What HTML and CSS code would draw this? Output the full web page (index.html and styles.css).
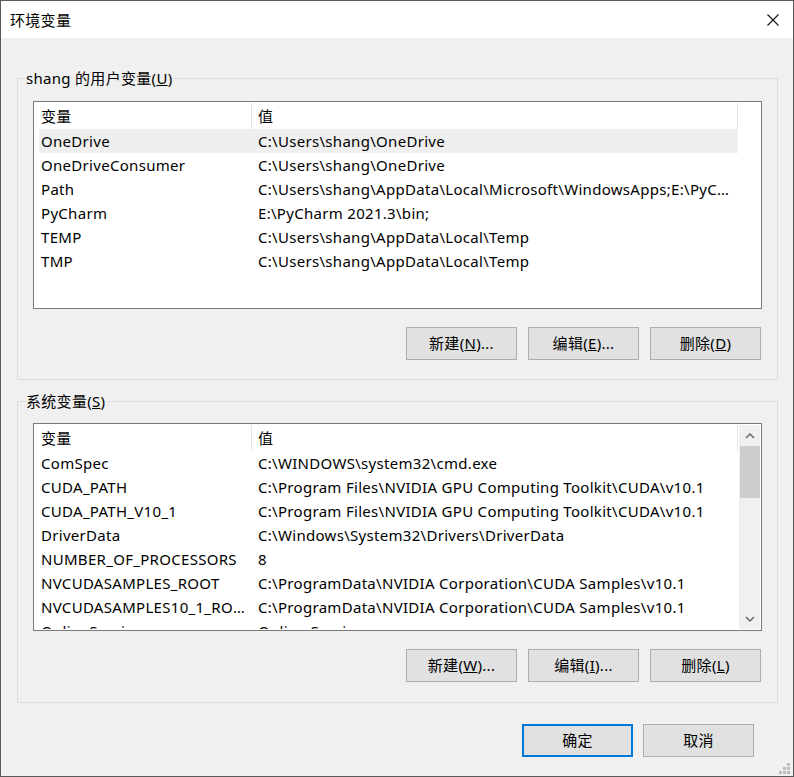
FILE: index.html
```html
<!DOCTYPE html>
<html lang="zh-CN">
<head>
  <meta charset="UTF-8">
  <title>环境变量</title>
  <link rel="stylesheet" href="styles.css">
</head>
<body>
  <div class="window">
    <div class="titlebar">
      <span class="title">环境变量</span>
      <svg class="close" width="12" height="12" viewBox="0 0 12 12">
        <path d="M0.5 0.5 L11.5 11.5 M11.5 0.5 L0.5 11.5" stroke="#111" stroke-width="1.1" fill="none"/>
      </svg>
    </div>

    <div class="content">
      <fieldset class="group">
        <legend>shang 的用户变量(<u>U</u>)</legend>
        <div class="list">
          <div class="list-table">
            <div class="row head">
              <div class="cell">变量</div>
              <div class="cell">值</div>
            </div>
            <div class="row selected">
              <div class="cell">OneDrive</div>
              <div class="cell">C:\Users\shang\OneDrive</div>
            </div>
            <div class="row">
              <div class="cell">OneDriveConsumer</div>
              <div class="cell">C:\Users\shang\OneDrive</div>
            </div>
            <div class="row">
              <div class="cell">Path</div>
              <div class="cell">C:\Users\shang\AppData\Local\Microsoft\WindowsApps;E:\PyCharm 2021.3\bin;</div>
            </div>
            <div class="row">
              <div class="cell">PyCharm</div>
              <div class="cell">E:\PyCharm 2021.3\bin;</div>
            </div>
            <div class="row">
              <div class="cell">TEMP</div>
              <div class="cell">C:\Users\shang\AppData\Local\Temp</div>
            </div>
            <div class="row">
              <div class="cell">TMP</div>
              <div class="cell">C:\Users\shang\AppData\Local\Temp</div>
            </div>
          </div>
        </div>
        <div class="actions">
          <button class="btn">新建(<u>N</u>)...</button>
          <button class="btn">编辑(<u>E</u>)...</button>
          <button class="btn">删除(<u>D</u>)</button>
        </div>
      </fieldset>

      <fieldset class="group">
        <legend>系统变量(<u>S</u>)</legend>
        <div class="list">
          <div class="list-table">
            <div class="row head">
              <div class="cell">变量</div>
              <div class="cell">值</div>
            </div>
            <div class="row">
              <div class="cell">ComSpec</div>
              <div class="cell">C:\WINDOWS\system32\cmd.exe</div>
            </div>
            <div class="row">
              <div class="cell">CUDA_PATH</div>
              <div class="cell">C:\Program Files\NVIDIA GPU Computing Toolkit\CUDA\v10.1</div>
            </div>
            <div class="row">
              <div class="cell">CUDA_PATH_V10_1</div>
              <div class="cell">C:\Program Files\NVIDIA GPU Computing Toolkit\CUDA\v10.1</div>
            </div>
            <div class="row">
              <div class="cell">DriverData</div>
              <div class="cell">C:\Windows\System32\Drivers\DriverData</div>
            </div>
            <div class="row">
              <div class="cell">NUMBER_OF_PROCESSORS</div>
              <div class="cell">8</div>
            </div>
            <div class="row">
              <div class="cell">NVCUDASAMPLES_ROOT</div>
              <div class="cell">C:\ProgramData\NVIDIA Corporation\CUDA Samples\v10.1</div>
            </div>
            <div class="row">
              <div class="cell">NVCUDASAMPLES10_1_ROOT</div>
              <div class="cell">C:\ProgramData\NVIDIA Corporation\CUDA Samples\v10.1</div>
            </div>
            <div class="row">
              <div class="cell">OnlineServices</div>
              <div class="cell">Online Services</div>
            </div>
          </div>
          <div class="scrollbar">
            <div class="sb-arrow">
              <svg width="10" height="6" viewBox="0 0 10 6"><path d="M1 5 L5 1 L9 5" stroke="#606060" stroke-width="1.4" fill="none"/></svg>
            </div>
            <div class="sb-thumb"></div>
            <div class="sb-track"></div>
            <div class="sb-arrow">
              <svg width="10" height="6" viewBox="0 0 10 6"><path d="M1 1 L5 5 L9 1" stroke="#606060" stroke-width="1.4" fill="none"/></svg>
            </div>
          </div>
        </div>
        <div class="actions">
          <button class="btn">新建(<u>W</u>)...</button>
          <button class="btn">编辑(<u>I</u>)...</button>
          <button class="btn">删除(<u>L</u>)</button>
        </div>
      </fieldset>

      <div class="footer">
        <button class="btn default">确定</button>
        <button class="btn">取消</button>
      </div>
    </div>

    <svg class="grip" width="11" height="11" viewBox="0 0 11 11">
      <rect x="8" y="0" width="3" height="3" fill="#bcbcbc"/>
      <rect x="4" y="4" width="3" height="3" fill="#bcbcbc"/>
      <rect x="8" y="4" width="3" height="3" fill="#bcbcbc"/>
      <rect x="0" y="8" width="3" height="3" fill="#bcbcbc"/>
      <rect x="4" y="8" width="3" height="3" fill="#bcbcbc"/>
      <rect x="8" y="8" width="3" height="3" fill="#bcbcbc"/>
    </svg>
  </div>
</body>
</html>
```

FILE: styles.css
```css
* {
  box-sizing: border-box;
}

body {
  margin: 0;
  font-family: "Noto Sans", "Noto Sans CJK SC", sans-serif;
  font-size: 15px;
  letter-spacing: 0.3px;
  color: #000;
  background-color: #f0f0f0;
}

.window {
  position: relative;
  width: 794px;
  height: 777px;
  border: 1px solid #5a5a5a;
  background-color: #f0f0f0;
  overflow: hidden;
}

.titlebar {
  height: 37px;
  background-color: #fff;
  display: flex;
  align-items: center;
  justify-content: space-between;
  padding: 0 14px 0 9px;
}

.title {
  line-height: 20px;
}

.content {
  padding: 30px 15px 0 16px;
}

.group {
  margin: 0;
  padding: 13px 15px 19px 15px;
  border: 1px solid #dcdcdc;
  min-width: 0;
}

.group + .group {
  margin-top: 11px;
  padding-top: 12px;
  padding-bottom: 20px;
}

.group legend {
  margin-left: -8px;
  padding: 0 1px;
  line-height: 20px;
}

.list {
  display: flex;
  width: 729px;
  height: 208px;
  padding: 1px;
  border: 1px solid #7a7a7a;
  background-color: #fff;
}

.list-table {
  flex: 1;
  padding-left: 4px;
  overflow: hidden;
}

.row {
  display: grid;
  grid-template-columns: 212px 487px;
  width: 699px;
  height: 24px;
  line-height: 24px;
}

.row .cell {
  padding: 0 6px 0 2px;
  white-space: nowrap;
  overflow: hidden;
  text-overflow: ellipsis;
}

.row .cell + .cell {
  padding-left: 7px;
}

.row.head {
  height: 26px;
  line-height: 26px;
}

.row.head .cell + .cell {
  padding-left: 6px;
  border-left: 1px solid #e5e5e5;
  border-right: 1px solid #e5e5e5;
}

.row.selected {
  background-color: #efefef;
}

.scrollbar {
  width: 21px;
  display: flex;
  flex-direction: column;
  background-color: #f0f0f0;
}

.sb-arrow {
  height: 21px;
  display: flex;
  align-items: center;
  justify-content: center;
}

.sb-thumb {
  height: 52px;
  margin: 0 0 0 1px;
  background-color: #cdcdcd;
}

.sb-track {
  flex: 1;
}

.actions {
  display: flex;
  justify-content: flex-end;
  gap: 11px;
  margin-top: 18px;
  padding-right: 1px;
}

.btn {
  width: 111px;
  height: 33px;
  padding: 0;
  font-family: inherit;
  font-size: 15px;
  letter-spacing: 0.3px;
  line-height: 20px;
  padding-bottom: 2px;
  color: #000;
  background-color: #e1e1e1;
  border: 1px solid #adadad;
}

.btn.default {
  border: 2px solid #0078d7;
}

.footer {
  display: flex;
  justify-content: flex-end;
  gap: 10px;
  margin-top: 21px;
  padding-right: 24px;
}

.grip {
  position: absolute;
  right: 3px;
  bottom: 2px;
}
```
